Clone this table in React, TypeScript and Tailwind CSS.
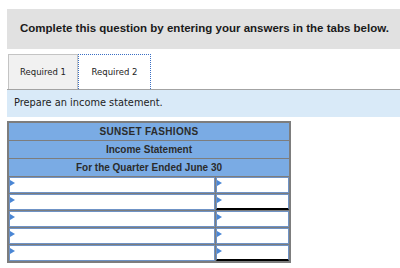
import type { ReactNode } from "react";

const ROWS = [
  { total: false },
  { total: true },
  { total: false },
  { total: false },
  { total: true },
];

function Marker() {
  return (
    <svg
      width="5"
      height="6"
      viewBox="0 0 5 6"
      className="pointer-events-none absolute left-0 top-[2px]"
    >
      <path d="M0 0 L5 3 L0 6 Z" fill="#4a86d4" />
    </svg>
  );
}

function Cell({ underline }: { underline?: boolean }) {
  return (
    <td className="border border-[#7d7d7d] p-0">
      <div
        className={`relative h-[16px] border border-[#6f93c6] bg-white ${
          underline ? "border-b-2 border-b-black" : ""
        }`}
      >
        <Marker />
      </div>
    </td>
  );
}

function HeadRow({ children }: { children: ReactNode }) {
  return (
    <tr>
      <th
        colSpan={2}
        className="h-[18px] border border-[#7d7d7d] bg-[#7aabe4] p-0 text-center text-[10px] font-bold text-[#2b2b2b]"
      >
        {children}
      </th>
    </tr>
  );
}

export default function App() {
  return (
    <div className="h-[268px] w-[400px] overflow-hidden bg-white pt-[9px] pl-[7px] font-['DejaVu_Sans',sans-serif] text-[#222]">
      <div className="flex h-[40px] items-center bg-[#e1e1e1] pl-[13px] font-['Liberation_Sans',sans-serif] text-[11.5px] font-bold text-[#1a1a1a]">
        Complete this question by entering your answers in the tabs below.
      </div>

      {/* tab strip */}
      <div className="mt-[5px] flex border-b border-[#a3a3a3]">
        <div className="ml-px flex h-[35px] w-[70px] items-center justify-center border border-b-0 border-[#c4c4c4] bg-[#f1f1f1] text-[8.5px]">
          Required 1
        </div>
        <div className="flex h-[35px] w-[73px] items-center justify-center border border-b-0 border-dotted border-[#3a6fc4] bg-white text-[8.5px]">
          Required 2
        </div>
      </div>

      <div className="flex h-[27px] items-center bg-[#d9eaf8] pl-[7px] text-[9.8px]">
        Prepare an income statement.
      </div>

      <table className="mt-[4px] w-[282px] table-fixed border-collapse border-2 border-[#7d7d7d] font-['Liberation_Sans',sans-serif]">
        <colgroup>
          <col className="w-[207px]" />
          <col className="w-[75px]" />
        </colgroup>
        <thead>
          <HeadRow>
            <span className="tracking-[0.3px]">SUNSET FASHIONS</span>
          </HeadRow>
          <HeadRow>Income Statement</HeadRow>
          <HeadRow>For the Quarter Ended June 30</HeadRow>
        </thead>
        <tbody>
          {ROWS.map((row, i) => (
            <tr key={i}>
              <Cell />
              <Cell underline={row.total} />
            </tr>
          ))}
        </tbody>
      </table>
    </div>
  );
}
